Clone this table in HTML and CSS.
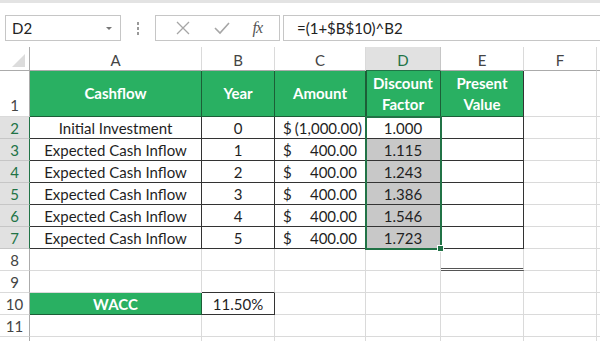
FILE: index.html
```html
<!DOCTYPE html>
<html lang="en">
<head>
  <meta charset="UTF-8">
  <title>Discount Factor</title>
  <link rel="stylesheet" href="styles.css">
</head>
<body>
  <div class="formulaBar">
    <div class="nameBox"><span>D2</span><span class="caret"></span></div>
    <div class="grip"><i></i><i></i><i></i></div>
    <div class="fxButtons">
      <svg width="16" height="14" viewBox="0 0 16 14"><path d="M2 1 L14 13 M14 1 L2 13" stroke="#a6a6a6" stroke-width="1.3" fill="none"/></svg>
      <svg width="18" height="14" viewBox="0 0 18 14"><path d="M2 7 L7 12 L16 2" stroke="#a6a6a6" stroke-width="1.6" fill="none"/></svg>
      <span class="fx">fx</span>
    </div>
    <div class="formula">=(1+$B$10)^B2</div>
  </div>

  <div class="sheet">
    <!-- column headers -->
    <div class="ch corner"><span class="tri"></span></div>
    <div class="ch">A</div>
    <div class="ch">B</div>
    <div class="ch">C</div>
    <div class="ch chSel">D</div>
    <div class="ch">E</div>
    <div class="ch">F</div>
    <div class="ch"></div>

    <!-- row 1 -->
    <div class="rh rhBottom">1</div>
    <div class="c hd">Cashflow</div>
    <div class="c hd">Year</div>
    <div class="c hd">Amount</div>
    <div class="c hd hdSel">Discount<br>Factor</div>
    <div class="c hd hdLast">Present<br>Value</div>
    <div class="c"></div>
    <div class="c"></div>

    <!-- row 2 -->
    <div class="rh sel">2</div>
    <div class="c dt center">Initial Investment</div>
    <div class="c dt center">0</div>
    <div class="c dt money"><span>$</span><span>(1,000.00)</span></div>
    <div class="c dt center">1.000</div>
    <div class="c dt"></div>
    <div class="c"></div>
    <div class="c"></div>

    <!-- row 3 -->
    <div class="rh sel">3</div>
    <div class="c dt center">Expected Cash Inflow</div>
    <div class="c dt center">1</div>
    <div class="c dt money"><span>$</span><span class="pos">400.00</span></div>
    <div class="c dt center shade">1.115</div>
    <div class="c dt"></div>
    <div class="c"></div>
    <div class="c"></div>

    <!-- row 4 -->
    <div class="rh sel">4</div>
    <div class="c dt center">Expected Cash Inflow</div>
    <div class="c dt center">2</div>
    <div class="c dt money"><span>$</span><span class="pos">400.00</span></div>
    <div class="c dt center shade">1.243</div>
    <div class="c dt"></div>
    <div class="c"></div>
    <div class="c"></div>

    <!-- row 5 -->
    <div class="rh sel">5</div>
    <div class="c dt center">Expected Cash Inflow</div>
    <div class="c dt center">3</div>
    <div class="c dt money"><span>$</span><span class="pos">400.00</span></div>
    <div class="c dt center shade">1.386</div>
    <div class="c dt"></div>
    <div class="c"></div>
    <div class="c"></div>

    <!-- row 6 -->
    <div class="rh sel">6</div>
    <div class="c dt center">Expected Cash Inflow</div>
    <div class="c dt center">4</div>
    <div class="c dt money"><span>$</span><span class="pos">400.00</span></div>
    <div class="c dt center shade">1.546</div>
    <div class="c dt"></div>
    <div class="c"></div>
    <div class="c"></div>

    <!-- row 7 -->
    <div class="rh sel">7</div>
    <div class="c dt center">Expected Cash Inflow</div>
    <div class="c dt center">5</div>
    <div class="c dt money"><span>$</span><span class="pos">400.00</span></div>
    <div class="c dt center shade">1.723</div>
    <div class="c dt"></div>
    <div class="c"></div>
    <div class="c"></div>

    <!-- row 8 -->
    <div class="rh">8</div>
    <div class="c"></div>
    <div class="c"></div>
    <div class="c"></div>
    <div class="c"></div>
    <div class="c dbl"></div>
    <div class="c"></div>
    <div class="c"></div>

    <!-- row 9 -->
    <div class="rh">9</div>
    <div class="c"></div>
    <div class="c boxTop"></div>
    <div class="c"></div>
    <div class="c"></div>
    <div class="c"></div>
    <div class="c"></div>
    <div class="c"></div>

    <!-- row 10 -->
    <div class="rh">10</div>
    <div class="c hd wacc">WACC</div>
    <div class="c dt center">11.50%</div>
    <div class="c"></div>
    <div class="c"></div>
    <div class="c"></div>
    <div class="c"></div>
    <div class="c"></div>

    <!-- row 11 -->
    <div class="rh">11</div>
    <div class="c"></div>
    <div class="c"></div>
    <div class="c"></div>
    <div class="c"></div>
    <div class="c"></div>
    <div class="c"></div>
    <div class="c"></div>

    <!-- row 12, only its top edge shows -->
    <div class="rh"></div>
    <div class="c"></div>
    <div class="c"></div>
    <div class="c"></div>
    <div class="c"></div>
    <div class="c"></div>
    <div class="c"></div>
    <div class="c"></div>

    <!-- selected range D2:D7, drawn over the cells -->
    <div class="selection"><span class="handle"></span></div>
  </div>
</body>
</html>
```

FILE: styles.css
```css
body {
    margin: 0;
    background: #fff;
    font-family: "Lato", "Liberation Sans", sans-serif;
    color: #1f1f1f;
    overflow: hidden;
}

/* formula bar */
.formulaBar {
    display: flex;
    align-items: center;
    height: 47px;
    border-top: 3px solid #e3e3e3;
    box-sizing: border-box;
    padding: 6px 0 0 5px;
}

.nameBox {
    width: 116px;
    height: 26px;
    box-sizing: border-box;
    border: 1px solid #c6c6c6;
    display: flex;
    align-items: center;
    justify-content: space-between;
    padding: 0 8px 0 6px;
    font-size: 15px;
    color: #222;
}

.caret {
    width: 0;
    height: 0;
    border-left: 3px solid transparent;
    border-right: 3px solid transparent;
    border-top: 3px solid #777;
}

.grip {
    width: 34px;
    display: flex;
    flex-direction: column;
    align-items: center;
    gap: 2px;
}

.grip i {
    width: 2px;
    height: 3px;
    background: #9a9a9a;
}

.fxButtons {
    width: 125px;
    height: 26px;
    box-sizing: border-box;
    border: 1px solid #c6c6c6;
    display: flex;
    align-items: center;
    justify-content: space-around;
    padding: 0 6px 0 8px;
}

.fx {
    font-family: "Liberation Serif", serif;
    font-style: italic;
    font-size: 16px;
    color: #555;
    letter-spacing: -1px;
}

.formula {
    flex: 1;
    height: 26px;
    margin-left: 3px;
    box-sizing: border-box;
    border: 1px solid #c6c6c6;
    border-right: none;
    display: flex;
    align-items: center;
    padding-left: 13px;
    font-size: 15px;
    color: #222;
}

/* sheet grid */
.sheet {
    display: grid;
    grid-template-columns: 30px 172px 73px 91px 75px 83px 73px 1fr;
    grid-template-rows: 24px 46px repeat(11, 22px);
    position: relative;
}

.sheet > div {
    box-sizing: border-box;
    border-right: 1px solid #dadada;
    border-bottom: 1px solid #dadada;
    white-space: nowrap;
    overflow: hidden;
    font-size: 15px;
    display: flex;
    align-items: center;
}

.ch {
    justify-content: center;
    color: #444;
    padding-top: 3px;
    border-bottom-color: #ababab !important;
}

.corner {
    position: relative;
    border-right-color: #ababab !important;
}

.tri {
    position: absolute;
    right: 4px;
    bottom: 3px;
    width: 0;
    height: 0;
    border-left: 13px solid transparent;
    border-bottom: 13px solid #dcdcdc;
}

.chSel {
    background: #e1e1e1;
    color: #217346;
    border-bottom: 1px solid #217346 !important;
    border-right-color: #c6c6c6 !important;
}

.rh {
    justify-content: center;
    color: #444;
    border-right-color: #ababab !important;
}

.rhBottom {
    align-items: flex-end !important;
    padding-bottom: 2px;
}

.rh.sel {
    background: #e1e1e1;
    color: #217346;
    border-right: 1px solid #217346 !important;
    border-bottom-color: #c6c6c6;
}

.c {
    padding: 0 4px;
}

.center {
    justify-content: center;
}

.hd {
    background: #29b062;
    color: #fff;
    font-weight: bold;
    justify-content: center;
    text-align: center;
    line-height: 21px;
    border-right: 1px solid #1c5e37 !important;
    border-bottom: 1px solid #1c5e37 !important;
}

.hdSel {
    box-shadow: inset 1px 0 0 #1c5e37;
}

.hdLast {
    border-right-color: #333 !important;
}

.dt {
    border-right: 1px solid #333 !important;
    border-bottom: 1px solid #333 !important;
    color: #1f1f1f;
}

.shade {
    background: #c8c8c8;
}

.money {
    justify-content: space-between;
    padding: 0 3px 0 8px;
}

.pos {
    padding-right: 5px;
}

.dbl {
    border-bottom: 3px double #555 !important;
}

.boxTop {
    border-bottom: 1px solid #333 !important;
}

.wacc {
    line-height: normal;
}

.selection {
    position: absolute;
    grid-column: 5 / 6;
    grid-row: 3 / 9;
    top: -1px;
    left: -1px;
    right: -1px;
    bottom: -1px;
    border: 2px solid #217346 !important;
    background: transparent;
    overflow: visible !important;
}

.handle {
    position: absolute;
    right: -4px;
    bottom: -4px;
    width: 5px;
    height: 5px;
    background: #217346;
    border: 1px solid #fff;
}
```
